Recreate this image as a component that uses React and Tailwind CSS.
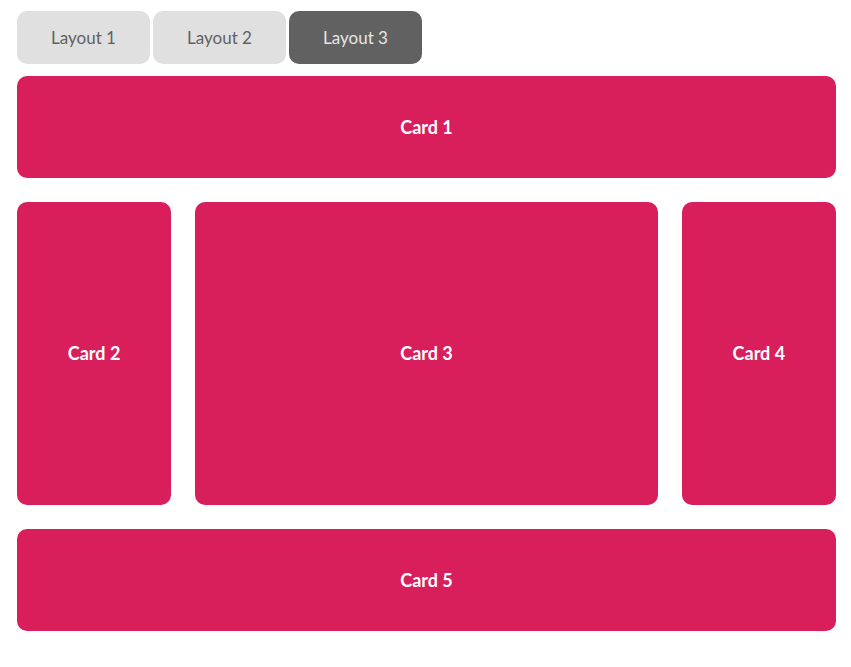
import React from "react";

export default function App() {
  const tabs = ["Layout 1", "Layout 2", "Layout 3"];
  return (
    <div className="min-h-[667px] bg-white pl-[17px] pr-[15px] pt-[11px]" style={{ fontFamily: "Lato, 'Open Sans', sans-serif" }}>
      <div className="flex gap-[3px]">
        {tabs.map((t, i) => (
          <button
            key={t}
            className={
              i === 2
                ? "w-[133px] h-[53px] rounded-[10px] bg-[#616161] text-[#e6e6e6] text-[17px]"
                : "w-[133px] h-[53px] rounded-[10px] bg-[#e0e0e0] text-[#616161] text-[17px]"
            }
          >
            {t}
          </button>
        ))}
      </div>
      <div className="mt-[12px] grid grid-cols-[1fr_3fr_1fr] grid-rows-[102px_303px_102px] gap-[24px] text-white font-bold text-[18px]">
        <div className="col-span-3 rounded-[10px] bg-[#d81e5b] flex items-center justify-center">Card 1</div>
        <div className="rounded-[10px] bg-[#d81e5b] flex items-center justify-center">Card 2</div>
        <div className="rounded-[10px] bg-[#d81e5b] flex items-center justify-center">Card 3</div>
        <div className="rounded-[10px] bg-[#d81e5b] flex items-center justify-center">Card 4</div>
        <div className="col-span-3 rounded-[10px] bg-[#d81e5b] flex items-center justify-center">Card 5</div>
      </div>
    </div>
  );
}
